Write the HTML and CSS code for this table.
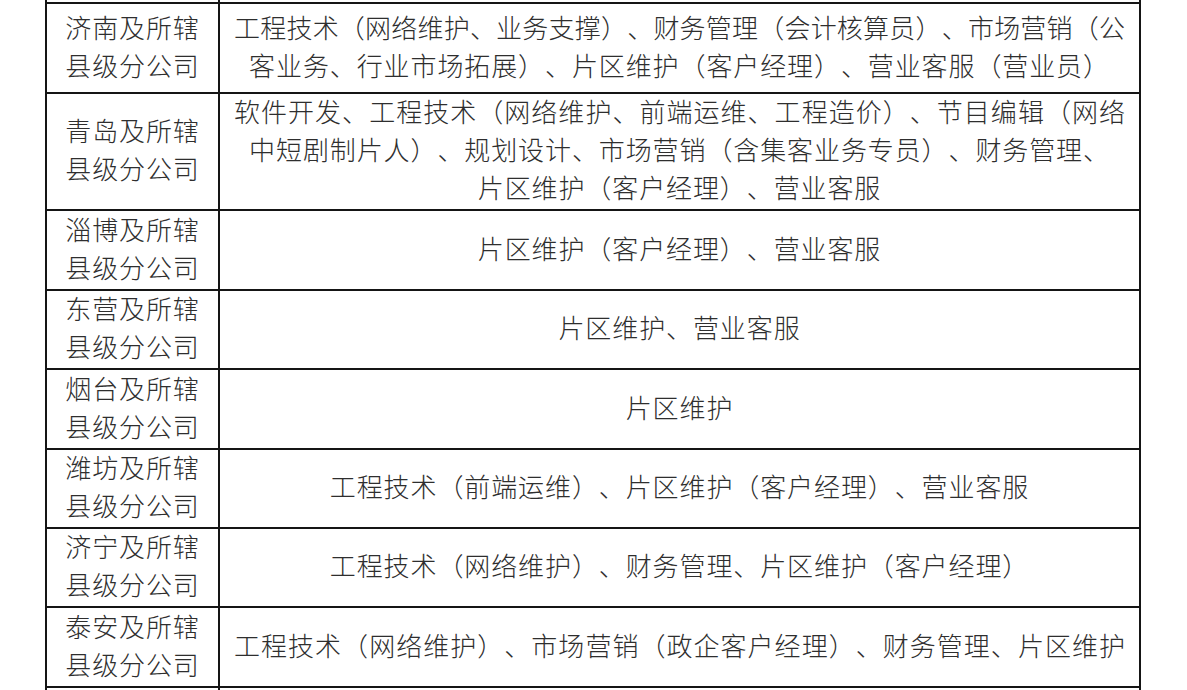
FILE: index.html
```html
<!DOCTYPE html>
<html lang="zh-CN">
<head>
<meta charset="utf-8">
<title>分公司岗位表</title>
<link rel="stylesheet" href="styles.css">
</head>
<body>
<div class="viewport">
<table class="posts">
  <tr class="row-prev">
    <td class="org"></td>
    <td class="jobs"></td>
  </tr>
  <tr class="row-h90">
    <td class="org"><span class="ln">济南及所辖</span><span class="ln">县级分公司</span></td>
    <td class="jobs"><span class="ln full">工程技术（网络维护、业务支撑）、财务管理（会计核算员）、市场营销（公</span><span class="ln">客业务、行业市场拓展）、片区维护（客户经理）、营业客服（营业员）</span></td>
  </tr>
  <tr class="row-h117">
    <td class="org"><span class="ln">青岛及所辖</span><span class="ln">县级分公司</span></td>
    <td class="jobs"><span class="ln full">软件开发、工程技术（网络维护、前端运维、工程造价）、节目编辑（网络</span><span class="ln">中短剧制片人）、规划设计、市场营销（含集客业务专员）、财务管理、</span><span class="ln">片区维护（客户经理）、营业客服</span></td>
  </tr>
  <tr class="row-h80">
    <td class="org"><span class="ln">淄博及所辖</span><span class="ln">县级分公司</span></td>
    <td class="jobs"><span class="ln">片区维护（客户经理）、营业客服</span></td>
  </tr>
  <tr class="row-h79">
    <td class="org"><span class="ln">东营及所辖</span><span class="ln">县级分公司</span></td>
    <td class="jobs"><span class="ln">片区维护、营业客服</span></td>
  </tr>
  <tr class="row-h80">
    <td class="org"><span class="ln">烟台及所辖</span><span class="ln">县级分公司</span></td>
    <td class="jobs"><span class="ln">片区维护</span></td>
  </tr>
  <tr class="row-h79">
    <td class="org"><span class="ln">潍坊及所辖</span><span class="ln">县级分公司</span></td>
    <td class="jobs"><span class="ln">工程技术（前端运维）、片区维护（客户经理）、营业客服</span></td>
  </tr>
  <tr class="row-h79">
    <td class="org"><span class="ln">济宁及所辖</span><span class="ln">县级分公司</span></td>
    <td class="jobs"><span class="ln">工程技术（网络维护）、财务管理、片区维护（客户经理）</span></td>
  </tr>
  <tr class="row-h80">
    <td class="org"><span class="ln">泰安及所辖</span><span class="ln">县级分公司</span></td>
    <td class="jobs"><span class="ln full">工程技术（网络维护）、市场营销（政企客户经理）、财务管理、片区维护</span></td>
  </tr>
  <tr class="row-h80">
    <td class="org"><span class="ln">&nbsp;</span></td>
    <td class="jobs"><span class="ln">&nbsp;</span></td>
  </tr>
</table>
</div>
</body>
</html>
```

FILE: styles.css
```css
html, body {
  margin: 0;
  padding: 0;
  background: #ffffff;
}
.viewport {
  width: 1187px;
  height: 690px;
  overflow: hidden;
}
.posts {
  border-collapse: collapse;
  margin-left: 45px;
  margin-top: -38px;
  width: 1096px;
  table-layout: fixed;
  font-family: "Noto Sans CJK SC", "Noto Sans", sans-serif;
  font-weight: 300;
  font-size: 26px;
  line-height: 38px;
  letter-spacing: 0.9px;
  color: #2e2e2e;
  text-spacing-trim: space-all;
  font-feature-settings: "halt" 0, "palt" 0, "chws" 0;
}
.posts td {
  border: 2px solid #151515;
  padding: 0;
  vertical-align: middle;
  text-align: center;
}
.posts td.org {
  width: 171px;
}
.posts td.jobs {
  padding: 0 14px;
}
.ln {
  display: block;
  white-space: nowrap;
}
.ln:first-child {
  margin-top: -5px;
}
.ln.full {
  text-align: justify;
  text-align-last: justify;
  letter-spacing: 0;
}
.row-prev td { height: 38px; }
.row-h90 td { height: 88px; }
.row-h117 td { height: 115px; }
.row-h80 td { height: 78px; }
.row-h79 td { height: 77px; }
```
